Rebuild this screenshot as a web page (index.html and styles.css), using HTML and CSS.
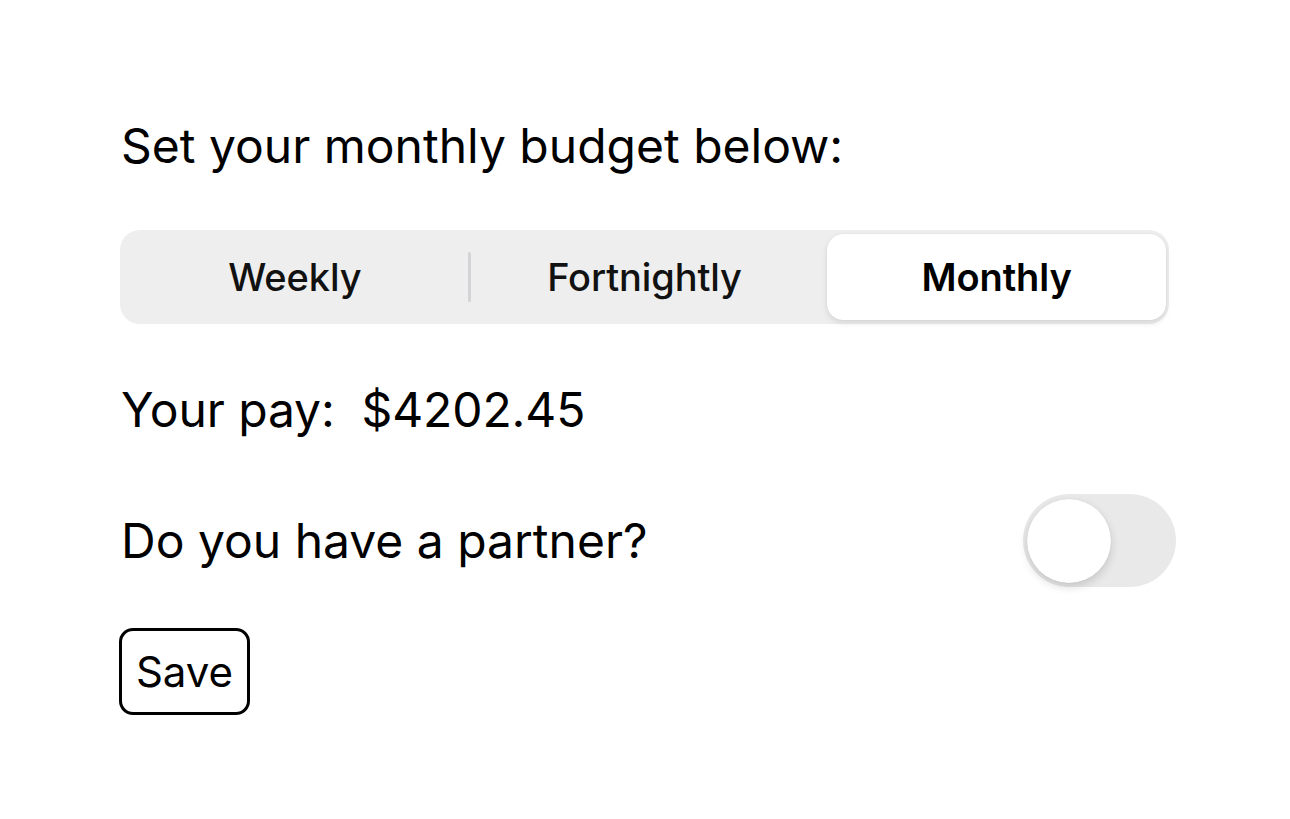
FILE: index.html
```html
<!DOCTYPE html>
<html>
<head>
<meta charset="utf-8">
<link rel="stylesheet" href="styles.css">
</head>
<body>
<main class="screen">
  <p class="heading">Set your monthly budget below:</p>
  <div class="segmented">
    <div class="segment with-divider">Weekly</div>
    <div class="segment">Fortnightly</div>
    <div class="segment selected"><span class="thumb">Monthly</span></div>
  </div>
  <p class="pay">Your pay:&nbsp; $4202.45</p>
  <div class="partner-row">
    <span class="label">Do you have a partner?</span>
    <div class="toggle"><div class="knob"></div></div>
  </div>
  <button class="save">Save</button>
</main>
</body>
</html>
```
FILE: styles.css
```css
* { box-sizing: border-box; }
html, body { margin: 0; padding: 0; background: #ffffff; }
body { width: 1290px; height: 819px; overflow: hidden; font-family: Inter, "Noto Sans", sans-serif; color: #000; }
.screen { display: flex; flex-direction: column; align-items: flex-start; padding: 112px 114px 0 120px; }
.heading { margin: 0 0 0 1px; font-size: 48px; line-height: 68px; letter-spacing: 0; }
.segmented { margin-top: 50px; width: 1049px; height: 94px; background: #eeeeef; border-radius: 20px; display: grid; grid-template-columns: repeat(3, 1fr); }
.segment { position: relative; display: flex; align-items: center; justify-content: center; font-size: 38px; font-weight: 500; letter-spacing: -0.1px; color: #111; }
.with-divider::after { content: ""; position: absolute; right: -1px; top: 22px; width: 3px; height: 50px; background: #d4d4d6; border-radius: 2px; }
.segment.selected { padding: 4px 3px 4px 8px; align-items: stretch; }
.thumb { flex: 1; display: flex; align-items: center; justify-content: center; background: #fff; border-radius: 16px; font-weight: 600; color: #000; box-shadow: 0 3px 6px rgba(0,0,0,0.10), 0 0 1px rgba(0,0,0,0.14); }
.pay { margin: 52px 0 0 1px; font-size: 48px; line-height: 68px; letter-spacing: -0.1px; }
.partner-row { margin-top: 50px; width: 1056px; display: flex; align-items: center; justify-content: space-between; }
.label { margin-left: 1px; font-size: 48px; letter-spacing: 0; }
.toggle { width: 153px; height: 93px; border-radius: 47px; background: #e9e9ea; padding: 4px; display: flex; align-items: center; }
.knob { width: 84px; height: 84px; border-radius: 50%; background: #fff; box-shadow: 0 4px 10px rgba(0,0,0,0.15), 0 0 1px rgba(0,0,0,0.15); }
.save { margin-top: 41px; font-family: inherit; font-size: 42px; color: #000; background: #fff; border: 3px solid #000; border-radius: 14px; padding: 0; height: 87px; width: 131px; margin-left: -1px; }
```
